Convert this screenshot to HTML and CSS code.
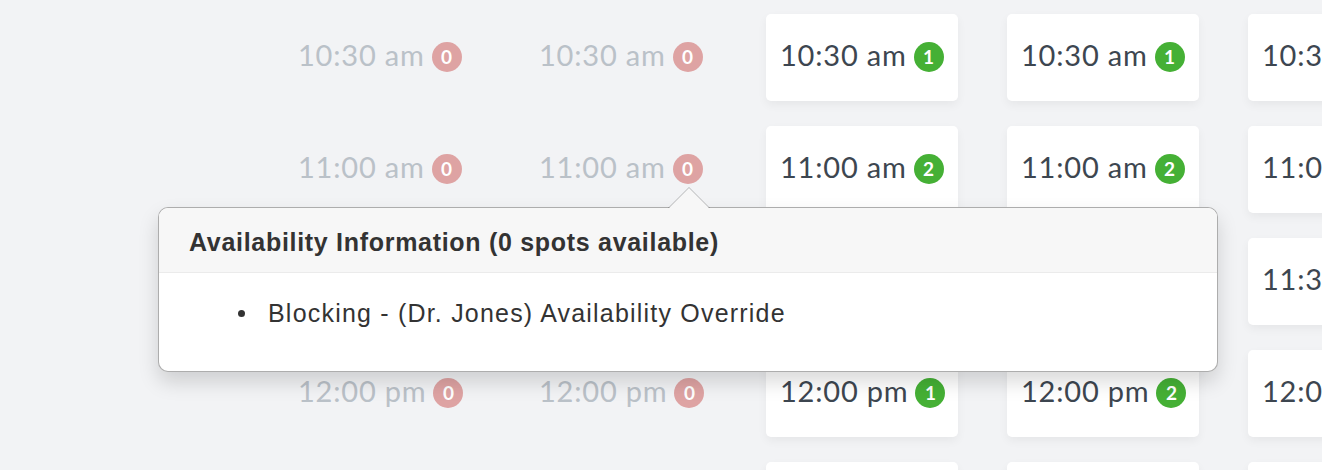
FILE: index.html
```html
<!DOCTYPE html>
<html lang="en">
<head>
    <meta charset="UTF-8">
    <title>Availability</title>
    <link rel="stylesheet" href="styles.css">
</head>
<body>
    <div class="schedule">
        <div class="slots">
            <!-- 10:30 -->
            <div class="slot off">10:30 am<span class="count">0</span></div>
            <div class="slot off">10:30 am<span class="count">0</span></div>
            <div class="slot">10:30 am<span class="count">1</span></div>
            <div class="slot">10:30 am<span class="count">1</span></div>
            <div class="slot">10:30 am<span class="count">1</span></div>
            <!-- 11:00 -->
            <div class="slot off">11:00 am<span class="count">0</span></div>
            <div class="slot off">11:00 am<span class="count">0</span></div>
            <div class="slot">11:00 am<span class="count">2</span></div>
            <div class="slot">11:00 am<span class="count">2</span></div>
            <div class="slot">11:00 am<span class="count">2</span></div>
            <!-- 11:30 -->
            <div class="slot off">11:30 am<span class="count">0</span></div>
            <div class="slot off">11:30 am<span class="count">0</span></div>
            <div class="slot">11:30 am<span class="count">1</span></div>
            <div class="slot">11:30 am<span class="count">2</span></div>
            <div class="slot">11:30 am<span class="count">2</span></div>
            <!-- 12:00 -->
            <div class="slot off">12:00 pm<span class="count">0</span></div>
            <div class="slot off">12:00 pm<span class="count">0</span></div>
            <div class="slot">12:00 pm<span class="count">1</span></div>
            <div class="slot">12:00 pm<span class="count">2</span></div>
            <div class="slot">12:00 pm<span class="count">2</span></div>
            <!-- 12:30 -->
            <div class="slot off">12:30 pm<span class="count">0</span></div>
            <div class="slot off">12:30 pm<span class="count">0</span></div>
            <div class="slot">12:30 pm<span class="count">1</span></div>
            <div class="slot">12:30 pm<span class="count">1</span></div>
            <div class="slot">12:30 pm<span class="count">1</span></div>
        </div>

        <div class="popover">
            <div class="arrow"></div>
            <h3 class="popover-title">Availability Information (0 spots available)</h3>
            <div class="popover-content">
                <ul>
                    <li>Blocking - (Dr. Jones) Availability Override</li>
                </ul>
            </div>
        </div>
    </div>
</body>
</html>
```

FILE: styles.css
```css
html, body {
    margin: 0;
    height: 100%;
    overflow: hidden;
}
body {
    background: #f2f3f5;
    font-family: Lato, "Open Sans", sans-serif;
}
.schedule {
    position: relative;
    padding: 14px 0 0 284px;
}
.slots {
    display: grid;
    grid-template-columns: repeat(5, 192px);
    grid-auto-rows: 87px;
    column-gap: 49px;
    row-gap: 25px;
}
.slot {
    box-sizing: border-box;
    padding: 25px 14px 0;
    font-size: 29px;
    line-height: 32px;
    letter-spacing: 0.8px;
    color: #3d4650;
    background: #fff;
    border-radius: 5px;
    box-shadow: 0 4px 10px rgba(0, 0, 0, 0.05);
    white-space: nowrap;
    overflow: hidden;
}
.slot.off {
    color: #bac1c8;
    background: none;
    box-shadow: none;
    overflow: visible;
}
.count {
    display: inline-block;
    width: 30px;
    height: 30px;
    margin-left: 7px;
    border-radius: 50%;
    background: #45b035;
    color: #fff;
    font-size: 19px;
    font-weight: bold;
    letter-spacing: 0;
    line-height: 30px;
    text-align: center;
    vertical-align: 2px;
}
.off .count {
    background: #dea3a3;
}

/* popover */
.popover {
    position: absolute;
    left: 158px;
    top: 207px;
    width: 1060px;
    box-sizing: border-box;
    background: #fff;
    border: 1px solid rgba(0, 0, 0, 0.32);
    border-radius: 10px;
    box-shadow: 0 10px 20px rgba(0, 0, 0, 0.15);
    font-family: "Liberation Sans", Arial, sans-serif;
    color: #333;
}
.arrow {
    position: absolute;
    top: -21px;
    left: 509px;
    border: 21px solid transparent;
    border-top: 0;
    border-bottom-color: rgba(0, 0, 0, 0.25);
}
.arrow:after {
    content: "";
    position: absolute;
    top: 1px;
    left: -20px;
    border: 20px solid transparent;
    border-top: 0;
    border-bottom-color: #f7f7f7;
}
.popover-title {
    margin: 0;
    padding: 18px 30px 14px;
    font-size: 25px;
    font-weight: bold;
    letter-spacing: 0.7px;
    line-height: 32px;
    background: #f7f7f7;
    border-bottom: 1px solid #ebebeb;
    border-radius: 9px 9px 0 0;
}
.popover-content {
    padding: 24px 30px 42px;
    font-size: 25px;
    letter-spacing: 1.2px;
    line-height: 32px;
}
.popover-content ul {
    margin: 0;
    padding-left: 49px;
    list-style: none;
}
.popover-content li {
    display: flex;
    align-items: center;
}
.popover-content li:before {
    content: "";
    width: 7px;
    height: 7px;
    margin-right: 23px;
    border-radius: 50%;
    background: #333;
}
```
